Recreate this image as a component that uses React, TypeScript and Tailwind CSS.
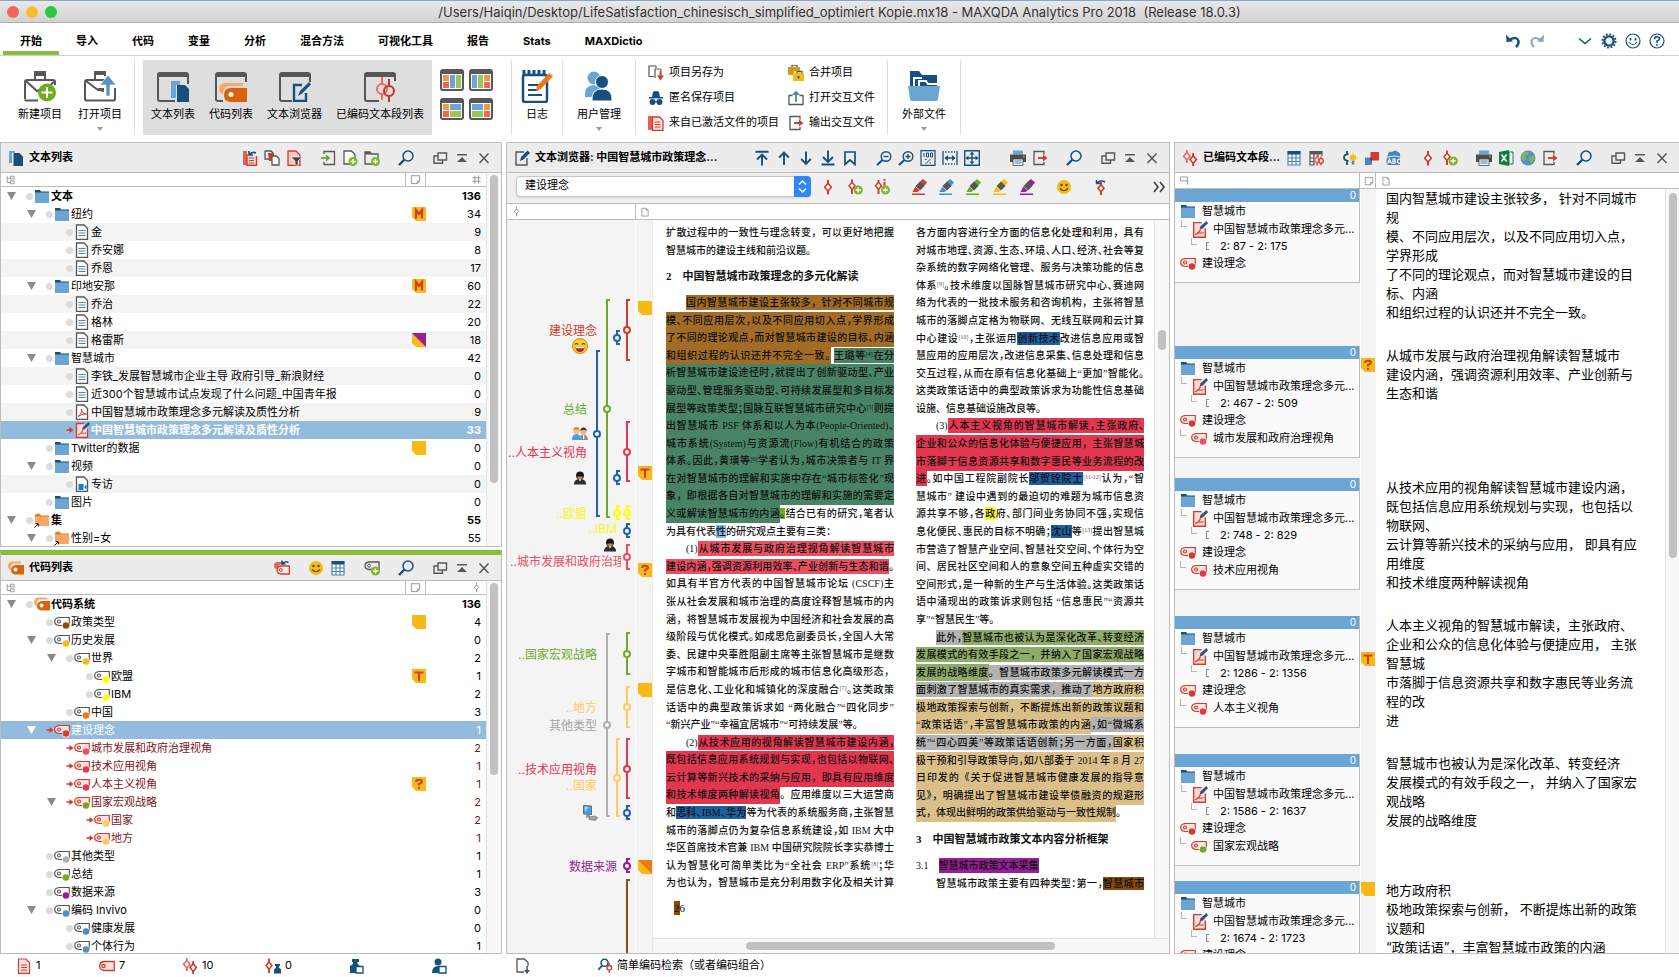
import { Fragment, type ReactNode } from "react";

const ICONS: Record<string, ReactNode> = {
  search: (
    <g fill="none" stroke="#17507f">
      <circle cx="10" cy="6" r="5" strokeWidth="1.5" />
      <path d="M6.500 9.500L1 15" strokeWidth="2.4" />
    </g>
  ),
  restore: (
    <g fill="none" stroke="#575757" strokeWidth="1.4">
      <path d="M6 3h8.500v7H6zM6 6H2v7.3h8.500V10" />
    </g>
  ),
  collapse: (
    <g fill="#575757">
      <path d="M3 4h10v1.400H3zM8 7l5 5H3z" />
    </g>
  ),
  close: <path d="M3.500 3.500l9 9.500M12.500 3.500l-9 9.500" stroke="#575757" strokeWidth="1.500" fill="none" />,
  textList: (
    <g>
      <path d="M1 1h6v2H4v10H1z" fill="#6ba5d3" />
      <path d="M5.500 3h6L15 6.500V16H5.500z" fill="#17507f" />
    </g>
  ),
  tags: (
    <g>
      <path d="M4.500 1.500H13v2H5.500Q3 3.500 3 7v3Q0 9 0 6q0-4.500 4.500-4.500z" fill="#fba667" />
      <path d="M7.500 5H16v9.500H7.500Q3 14 3 10t4.500-5z" fill="#dc6108" />
      <circle cx="7.500" cy="9.500" r="2" fill="#fff" />
    </g>
  ),
  docsUndo: (
    <g fill="none">
      <path d="M1 1h4v14H1z" fill="#e26256" />
      <path d="M5 4v11.300h9.500V6" stroke="#d23c2a" strokeWidth="1.400" fill="#f9dcd9" />
      <path d="M7 8h5M7 10.500h5M7 13h5" stroke="#d23c2a" strokeWidth="1.200" />
      <path d="M7 1v4h4M7 5q3-4 7-2" stroke="#17507f" strokeWidth="1.600" />
    </g>
  ),
  docsCopy: (
    <g fill="none" strokeWidth="1.300">
      <path d="M1 1h6l2 2v6H1z" stroke="#575757" />
      <path d="M4 3h6v8H5z" fill="#d23c2a" />
      <path d="M8 6h4.500L15 8.500V15H8z" fill="#fff" stroke="#575757" />
    </g>
  ),
  docFilter: (
    <g>
      <path d="M2 1h8l4 4v10.300H2z" fill="#f6c9c5" stroke="#d23c2a" strokeWidth="1.300" />
      <path d="M5 7h11l-4 4v5l-3-2v-3z" fill="#444" stroke="#fff" strokeWidth=".6" />
    </g>
  ),
  docImport: (
    <g fill="none">
      <path d="M4 4V1.500h10.500v13H4V12" stroke="#575757" strokeWidth="1.300" />
      <path d="M1 8h6" stroke="#6faa20" strokeWidth="1.800" />
      <path d="M6 4.500L10.500 8 6 11.500z" fill="#6faa20" />
    </g>
  ),
  docAdd: (
    <g fill="none">
      <path d="M2 1h7.500L13 4.500V14H2z" fill="#fff" stroke="#575757" strokeWidth="1.300" />
      <circle cx="11" cy="11.500" r="4.500" fill="#7fb52f" />
      <path d="M11 9v5M8.500 11.500h5" stroke="#fff" strokeWidth="1.300" />
    </g>
  ),
  folderAdd: (
    <g fill="none">
      <path d="M1 13V2h5l1.500 2H14v10H1z" stroke="#575757" strokeWidth="1.300" />
      <path d="M1 2h5l1.500 2.500H1z" fill="#575757" />
      <circle cx="11.500" cy="11.500" r="4.500" fill="#7fb52f" />
      <path d="M11.500 9v5M9 11.500h5" stroke="#fff" strokeWidth="1.300" />
    </g>
  ),
  tree: (
    <g fill="none" stroke="#8a8a8a" strokeWidth="1.300">
      <path d="M2 2v10h5M2 5h5M7 2h6v4.500H7zM7 9.500h6V14H7z" />
    </g>
  ),
  note: <path d="M2 2.500h12v8L10.500 14H2zM14 10.500h-3.500V14" fill="none" stroke="#8a8a8a" strokeWidth="1.300" />,
  hash: <path d="M5.500 2v12M11 2v12M2 5.500h12M2 10.500h12" fill="none" stroke="#8a8a8a" strokeWidth="1.300" />,
  knot: <path d="M8 1v4M8 11v4M8 4.500l3 3.500-3 3.500L5 8z" fill="none" stroke="#8a8a8a" strokeWidth="1.300" />,
  page: <path d="M3 2h7l3 3v9.500H3zM10 2v3h3" fill="none" stroke="#8a8a8a" strokeWidth="1.200" />,
  flag: <path d="M12.500 14V3H2v5.500h10.500" fill="none" stroke="#8a8a8a" strokeWidth="1.300" />,
  folder: (
    <g>
      <path d="M1 2h5l1.200 1.500H15V6H1z" fill="#17507f" />
      <path d="M1 4.500h14V15H1z" fill="#6ba5d3" />
    </g>
  ),
  folderSet: (
    <g>
      <path d="M1 3q4-3 6 .500h8V6H1z" fill="#ea7a17" />
      <path d="M1 4.500h14V14H1z" fill="#fba667" />
      <path d="M0 11h5v5H0z" fill="#fff" />
      <path d="M.500 15.500L4 12M1.500 11.700H4.300V14.500" fill="none" stroke="#000" />
    </g>
  ),
  doc: (
    <g fill="none">
      <path d="M2.500 1h7.500L13.500 4.500v10.800h-11z" stroke="#575757" strokeWidth="1.300" fill="#fff" />
      <path d="M4.500 6.500h7M4.500 9h7M4.500 11.500h7" stroke="#4b87bb" />
    </g>
  ),
  pdf: (
    <g fill="none">
      <path d="M2.500 1h7.500L13.500 4.500v10.800h-11z" stroke="#575757" strokeWidth="1.300" fill="#fff" />
      <path d="M4 12.500Q8 10 7.500 5q0 4.500 5 5Q8 9.500 4 12.500z" stroke="#d23c2a" />
    </g>
  ),
  pdfEdit: (
    <g fill="none">
      <path d="M10 1.500H2.500v13.800h11V7" stroke="#d23c2a" strokeWidth="1.300" fill="#f9dcd9" />
      <path d="M4 13q4-2 5-5M7 11q3 .500 5 0" stroke="#d23c2a" />
      <path d="M8 8l1-3 5.500-5L16 2l-5 5z" fill="#2e5380" />
    </g>
  ),
  video: (
    <g fill="none">
      <path d="M2.500 1h7.500L13.500 4.500v10.800h-11z" stroke="#575757" strokeWidth="1.300" fill="#fff" />
      <path d="M4.500 8h5v6h-5zM10 11l2.500-2.500v5z" fill="#0e7fc0" />
    </g>
  ),
  arrow: <path d="M1 6.500h6V2l8 6-8 6V9.500H1z" fill="#d23c2a" />,
  tagUndo: (
    <g fill="none">
      <path d="M3.500 2H8v2Q3 5 3.500 9 0 9 0 5.500T3.500 2z" fill="#e26256" />
      <path d="M7 6h8.300v8H7Q3 13.500 3 10t4-4z" fill="#fde8e6" stroke="#d23c2a" strokeWidth="1.300" />
      <circle cx="6.800" cy="10" r="1.500" stroke="#d23c2a" />
      <path d="M8 .500v3.500h3.500M8 4q3-3.500 6.500-1.500" stroke="#17507f" strokeWidth="1.600" />
    </g>
  ),
  tagAdd: (
    <g fill="none">
      <path d="M5 2h10v7.500H5Q1 9 1 5.700T5 2z" stroke="#575757" strokeWidth="1.300" />
      <circle cx="5" cy="5.700" r="1.500" stroke="#575757" />
      <circle cx="11.500" cy="11" r="4.500" fill="#7fb52f" />
      <path d="M11.500 8.500v5M9 11h5" stroke="#fff" strokeWidth="1.300" />
    </g>
  ),
  smile: (
    <g>
      <circle cx="8" cy="8" r="7" fill="#f6b918" />
      <circle cx="5.500" cy="6" r="1.200" fill="#5c4a1c" />
      <circle cx="10.500" cy="6" r="1.200" fill="#5c4a1c" />
      <path d="M4 9.500q4 4.500 8 0" fill="none" stroke="#5c4a1c" strokeWidth="1.200" />
    </g>
  ),
  grid: (
    <g fill="none">
      <path d="M2 4.500v10.500h12V4.500M6 4v11M10 4v11M2 8h12M2 11.500h12" stroke="#4b87bb" strokeWidth="1.200" fill="#fff" />
      <path d="M1.400 1h13.200v3.500H1.400z" fill="#17507f" />
    </g>
  ),
  gridCode: (
    <g fill="none">
      <path d="M2 4.500v10.500h4M14 4.500V6M6 4v11M10 4v3M2 8h4M2 11.500h4" stroke="#575757" strokeWidth="1.200" />
      <path d="M1.400 1h13.200v3.500H1.400z" fill="#575757" />
      <path d="M9 5.500v2M9 12.500v3M13 6.500v2M13 13.500v2" stroke="#d23c2a" strokeWidth="1.300" />
      <circle cx="9" cy="10" r="2.300" stroke="#e26256" strokeWidth="1.300" />
      <circle cx="13" cy="11" r="2.300" stroke="#d23c2a" strokeWidth="1.300" />
    </g>
  ),
  edit: (
    <g fill="none">
      <path d="M10 2H2v13h11V8" stroke="#575757" strokeWidth="1.400" />
      <path d="M6 11l1-4 6.500-6.500L16 3 9.500 9.500z" fill="#17507f" />
    </g>
  ),
  toTop: <path d="M1.500 1.700h13M8 15.500V5M3 9.500l5-5 5 5" fill="none" stroke="#17507f" strokeWidth="1.900" />,
  up: <path d="M8 15V3M3.200 7.500L8 2.500l4.800 5" fill="none" stroke="#17507f" strokeWidth="1.900" />,
  down: <path d="M8 1.500v12M3.200 9L8 14l4.800-5" fill="none" stroke="#17507f" strokeWidth="1.900" />,
  toBottom: <path d="M1.500 14.500h13M8 .500v11M3 7l5 5 5-5" fill="none" stroke="#17507f" strokeWidth="1.900" />,
  bookmark: <path d="M3 2h10v12.500l-5-4.500-5 4.500z" fill="none" stroke="#17507f" strokeWidth="1.700" />,
  zoomOut: (
    <g fill="none" stroke="#17507f">
      <circle cx="10" cy="6.500" r="4.800" strokeWidth="1.400" />
      <path d="M7.500 6.500h5" strokeWidth="1.300" />
      <path d="M6.500 10L1 15" strokeWidth="2" />
    </g>
  ),
  zoomIn: (
    <g fill="none" stroke="#17507f">
      <circle cx="10" cy="6.500" r="4.800" strokeWidth="1.400" />
      <path d="M7.500 6.500h5M10 4v5" strokeWidth="1.300" />
      <path d="M6.500 10L1 15" strokeWidth="2" />
    </g>
  ),
  full: (
    <g fill="none" stroke="#17507f">
      <path d="M1 .700h14v14.600H1z" strokeWidth="1.200" />
      <path d="M4 3v4M6.500 3h2v4h-2zM10.500 3h2v4h-2zM10.500 9l-5 5M5 9.500h1.500M9.500 13H11" />
    </g>
  ),
  fitWidth: (
    <g fill="none" stroke="#17507f" strokeWidth="1.300">
      <path d="M1 1v14M15 1v14M3 8h10" />
      <path d="M3 2h10M3 14h10" strokeDasharray="1.500 1.500" />
      <path d="M6 5L2.500 8 6 11zM10 5l3.500 3L10 11z" fill="#17507f" stroke="none" />
    </g>
  ),
  fitPage: (
    <g fill="none" stroke="#17507f" strokeWidth="1.400">
      <path d="M.700.700h14.600v14.600H.700zM8 3v10M3 8h10" />
      <path d="M8 1.500l2.500 3h-5zM8 14.500l2.500-3h-5zM1.500 8l3-2.500v5zM14.500 8l-3-2.500v5z" fill="#17507f" stroke="none" />
    </g>
  ),
  printer: (
    <g>
      <path d="M3 .500h10v4H3z" fill="#6ba5d3" />
      <path d="M0 4.500h16v7.500H0z" fill="#4d4d4d" />
      <path d="M3 9h10v6.500H3z" fill="#e9f0f6" stroke="#4d4d4d" strokeWidth=".8" />
      <path d="M4.500 11h7M4.500 13h7" stroke="#4b87bb" />
      <circle cx="13.800" cy="6.500" r=".9" fill="#7fb52f" />
    </g>
  ),
  exportIcon: (
    <g fill="none">
      <path d="M12 4.500V1.500H2v13h10V12" stroke="#575757" strokeWidth="1.300" />
      <path d="M6 8h6" stroke="#d23c2a" strokeWidth="1.900" />
      <path d="M11 4.500L15.500 8 11 11.500z" fill="#d23c2a" />
    </g>
  ),
  code: (
    <g fill="none" stroke="#d23c2a">
      <path d="M8 1v4M8 11v4.500" strokeWidth="2" />
      <path d="M8 4.300l3.300 3.900L8 12 4.700 8.200z" strokeWidth="1.600" fill="#fff" />
    </g>
  ),
  codeAdd: (
    <g fill="none">
      <path d="M5 .500v3M5 10.500V15" stroke="#d23c2a" strokeWidth="1.900" />
      <path d="M5 3.300l3 3.500-3 3.700-3-3.700z" stroke="#d23c2a" strokeWidth="1.500" fill="#fff" />
      <circle cx="11.200" cy="11" r="4.600" fill="#7fb52f" />
      <path d="M11.200 8.500v5M8.700 11h5" stroke="#fff" strokeWidth="1.300" />
    </g>
  ),
  codeInvivo: (
    <g fill="none">
      <path d="M4.500 1v3M4.500 10.500V15M10.500 0v1.800M10.500 2.800v4" stroke="#d23c2a" strokeWidth="1.900" />
      <path d="M4.500 3.300l3 3.500-3 3.700-3-3.700z" stroke="#d23c2a" strokeWidth="1.500" fill="#fff" />
      <circle cx="11.500" cy="11" r="4.500" fill="#7fb52f" />
      <path d="M11.500 8.500v5M9 11h5" stroke="#fff" strokeWidth="1.300" />
    </g>
  ),
  codeUndo: (
    <g fill="none">
      <path d="M8 3v3M8 12v4" stroke="#d23c2a" strokeWidth="2" />
      <path d="M8 5.700l3 3.500-3 3.500-3-3.500z" stroke="#d23c2a" strokeWidth="1.600" fill="#fff" />
      <path d="M3.500 1v3.500h4M4 4q3-3.500 8-1" stroke="#17507f" strokeWidth="1.500" />
    </g>
  ),
  codes: (
    <g fill="none">
      <path d="M4.800 0v3M4.800 10v3" stroke="#e8695d" strokeWidth="1.800" />
      <path d="M4.800 2.500L8 6.200l-3.200 3.900L1.600 6.200z" stroke="#e8695d" strokeWidth="1.500" />
      <path d="M11.200 3v3M11.200 13v3" stroke="#c93324" strokeWidth="1.800" />
      <path d="M11.200 5.700l3.200 3.800-3.200 3.900L8 9.500z" stroke="#c93324" strokeWidth="1.500" />
    </g>
  ),
  codeIdea: (
    <g fill="none">
      <path d="M5 1v3M5 11v4M6.500 4Q2 4.500 2 7.500T6.500 11" stroke="#17507f" strokeWidth="1.800" />
      <circle cx="11" cy="8" r="3" fill="#f6b918" />
      <path d="M11 3v1.500M6.500 8H8M14.500 8H16M8 5l1 1M14 5l-1 1" stroke="#f6b918" />
      <path d="M9.700 11h2.600v3.500H9.700z" fill="#4b87bb" />
    </g>
  ),
  squares: (
    <g>
      <path d="M1 7.500h7V15H1z" fill="#4b87bb" />
      <path d="M6.500 2H15v8.500H6.500z" fill="#d23c2a" />
      <path d="M6.500 7.500H8v3H6.500z" fill="#7b2a52" />
    </g>
  ),
  cloud: (
    <g>
      <path d="M2 5q0-4 4-3 3-3 6 0 3 1 2 4v9H1.500Q-1 11 2 5z" fill="#4b87bb" />
      <path d="M0 8q8-4 16 0" stroke="#dbe8f3" fill="none" />
      <path d="M1.500 13.500l2-4.500 2 4.500M2.300 12h2.400M7 13.500V9h1.500q1.500 1 0 2.200 2 1 0 2.300zM14.500 9.500q-3-1-3 1.700t3 1.800" fill="none" stroke="#fff" strokeWidth="1.100" />
    </g>
  ),
  excel: (
    <g>
      <path d="M1 2l10-2v16L1 14z" fill="#0f7c41" />
      <path d="M11 2h4v12h-4z" fill="#fff" stroke="#0f7c41" />
      <path d="M3.500 4.500l5 7M8.500 4.500l-5 7" stroke="#fff" strokeWidth="1.600" />
    </g>
  ),
  globe: (
    <g>
      <circle cx="8" cy="8" r="7.500" fill="#5490c6" />
      <path d="M3 3q3-3 6-1L8 5 5 6l1 4-3 1-2-3zM9 7l5-2 1 4-3 4-3-2z" fill="#7fb552" />
    </g>
  ),
  undo: (
    <g>
      <path d="M5 6.500Q12 3 13.500 8q.300 3.500-2.500 6" fill="none" stroke="#17507f" strokeWidth="2.500" />
      <path d="M1 1.500L1.500 9l6.500-.500z" fill="#17507f" />
    </g>
  ),
  redo: (
    <g>
      <path d="M11 6.500Q4 3 2.500 8q-.300 3.500 2.500 6" fill="none" stroke="#8aa6c1" strokeWidth="2" />
      <path d="M15 1.500L14.500 9 8 8.500z" fill="#8aa6c1" />
    </g>
  ),
  chevron: <path d="M2 5.500l6 5 6-5" fill="none" stroke="#17507f" strokeWidth="1.600" />,
  gear: (
    <g fill="none" stroke="#17507f">
      <circle cx="8" cy="8" r="4.600" strokeWidth="2.400" />
      <circle cx="8" cy="8" r="6.600" strokeWidth="1.900" strokeDasharray="1.900 1.560" />
    </g>
  ),
  face: (
    <g fill="none" stroke="#17507f" strokeWidth="1.200">
      <circle cx="8" cy="8" r="7" />
      <path d="M4 9q4 5.500 8 0" />
      <path d="M5.500 5v2.500M10.500 5v2.500" strokeWidth="1.700" />
    </g>
  ),
  help: (
    <g fill="none" stroke="#17507f" strokeWidth="1.200">
      <circle cx="8" cy="8" r="7" />
      <path d="M5.500 6.300q0-2.500 2.500-2.500t2.500 2Q10.500 7.300 8 8v2" strokeWidth="1.600" />
      <path d="M8 11v1.700" strokeWidth="1.600" />
    </g>
  ),
  saveAs: (
    <g fill="none">
      <path d="M6 11.500H1V1h7v2" stroke="#575757" strokeWidth="1.200" />
      <path d="M7 13V4h5l1.500 1.500" stroke="#575757" strokeWidth="1.200" />
      <path d="M12.500 6v5" stroke="#d23c2a" strokeWidth="2" />
      <path d="M9 10.500h7L12.500 15.500z" fill="#d23c2a" />
    </g>
  ),
  incognito: (
    <g fill="#17507f">
      <path d="M5 2q3-2 6 0l1 5h3v1.500H1V7h3z" />
      <circle cx="4.500" cy="12" r="3" />
      <circle cx="11.500" cy="12" r="3" />
      <path d="M6 11h4v1.200H6z" />
    </g>
  ),
  docsActive: (
    <g>
      <path d="M0 1h5v14H0z" fill="#e26256" />
      <path d="M4.500 2h7L15 5.500v10H4.500z" fill="#fbe3e1" stroke="#d23c2a" strokeWidth="1.300" />
      <path d="M7 7h5.500M7 9.500h5.500M7 12h5.500" stroke="#d23c2a" />
    </g>
  ),
  merge: (
    <g>
      <path d="M4 2V0h5v2M9 8V6.500h5V8" fill="none" stroke="#575757" strokeWidth="1.300" />
      <path d="M0 2h12v4H6v4H0z" fill="#d39a12" />
      <path d="M5 8h11v8H5z" fill="#f6b918" />
      <path d="M9.500 11h2v2.500h-2z" fill="#575757" />
    </g>
  ),
  openFile: (
    <g fill="none">
      <path d="M4.500 5.500H1v9h14v-9h-3.500" stroke="#575757" strokeWidth="1.300" />
      <path d="M8 12V4" stroke="#4b87bb" strokeWidth="1.800" />
      <path d="M8 .500l4 4.500H4z" fill="#4b87bb" />
    </g>
  ),
  tagRed: (
    <g fill="none" stroke="#d23c2a" strokeWidth="1.300">
      <path d="M5 3.500h10.300v9H5Q.700 12 .700 8T5 3.500z" fill="#fbe3e1" />
      <circle cx="4.500" cy="8" r="1.600" />
    </g>
  ),
  docRed: (
    <g fill="none" stroke="#d23c2a" strokeWidth="1.200">
      <path d="M2.500 1H10l3.500 3.500v10.800h-11z" fill="#fbe3e1" />
      <path d="M5 7h6M5 9.500h6M5 12h6" />
    </g>
  ),
  codeWeight: (
    <g>
      <path d="M4 .500v4M4 11v4" stroke="#d23c2a" strokeWidth="1.900" />
      <path d="M4 4l3 3.500-3 3.700-3-3.700z" fill="#fff" stroke="#d23c2a" strokeWidth="1.500" />
      <path d="M10 6h5v2h-1v1.500l2 2V15.500H9v-4l2-2V8h-1z" fill="#17507f" />
    </g>
  ),
  weight: (
    <g>
      <path d="M4 1h7v3H9.500v2L12 8v7H2V8l3-2V4H4z" fill="#17507f" />
      <path d="M8 8.500h7V15H8z" fill="#fff" stroke="#17507f" strokeWidth="1.300" />
    </g>
  ),
  user: (
    <g>
      <circle cx="7" cy="4" r="3.500" fill="#17507f" />
      <path d="M1 15q0-7 6-7t5 7z" fill="#17507f" />
      <path d="M8 8.500h7V15H8z" fill="#fff" stroke="#17507f" strokeWidth="1.300" />
    </g>
  ),
  docDown: (
    <g fill="none">
      <path d="M9 14H2V1h7.500L13 4.500V8" stroke="#575757" strokeWidth="1.300" />
      <path d="M12 8v5" stroke="#2e5380" strokeWidth="1.500" />
      <path d="M9 12h6l-3 4z" fill="#2e5380" />
    </g>
  ),
  retrieval: (
    <g fill="none">
      <circle cx="7" cy="5" r="3.800" stroke="#17507f" strokeWidth="1.600" />
      <path d="M4.500 8L.500 12.500" stroke="#17507f" strokeWidth="2" />
      <path d="M12 5v3M12 13v3" stroke="#d23c2a" strokeWidth="1.300" />
      <circle cx="12" cy="10.500" r="2.500" stroke="#d23c2a" strokeWidth="1.400" />
    </g>
  ),
  laugh: (
    <g>
      <circle cx="8" cy="8" r="7.500" fill="#fbcf2b" stroke="#c98a10" />
      <path d="M3 6.500q1.500-2 3 0M10 6.500q1.500-2 3 0" fill="none" stroke="#4a3208" strokeWidth="1.200" />
      <path d="M3 8.500h10q-1 5.500-5 5.500T3 8.500z" fill="#b02d1c" />
      <path d="M3.500 8.500h9v1.700h-9z" fill="#fff" />
    </g>
  ),
  pair: (
    <g>
      <circle cx="4.500" cy="5" r="3" fill="#f3c08f" />
      <path d="M1.300 5q0-4 3.200-4t3.200 4l-1-1.500h-4z" fill="#d8812a" />
      <path d="M0 14q0-6 4.500-6T9 14z" fill="#4aa0e0" />
      <circle cx="11.500" cy="5.500" r="3" fill="#e8b48a" />
      <path d="M8.300 5.500q0-4 3.200-4t3.200 4l-1-1.500h-4z" fill="#4b2c14" />
      <path d="M7.500 14q0-5.500 4-5.500T16 14z" fill="#8a8a8a" />
      <path d="M11 9h1.200v4H11z" fill="#fff" />
    </g>
  ),
  agent: (
    <g>
      <circle cx="8" cy="5" r="4.500" fill="#1c1c1c" />
      <path d="M5 5h6v2q-1 2.500-3 2.500T5 7z" fill="#b98259" />
      <path d="M4.500 4.500h7v1.700h-7z" fill="#000" />
      <path d="M1 15.500q0-6.500 7-6.500t7 6.500z" fill="#2d2d2d" />
      <path d="M6.500 9.500L8 12l1.500-2.500z" fill="#fff" />
    </g>
  ),
  computer: (
    <g>
      <path d="M1.500.500l8 .500v8.500l-8-.500z" fill="#4a9fdc" stroke="#5d6d7a" />
      <path d="M2.500 1.500l4 .500-3.500 5z" fill="#a6d6f5" />
      <path d="M4.500 10h3l1 2.500h-5z" fill="#8a99a5" />
      <path d="M7 12l6-1 3 2-3 2.500-6-1z" fill="#9aa5ad" stroke="#5d6d7a" strokeWidth=".6" />
    </g>
  ),
};

function Icon({ name, className = "size-4" }: { name: string; className?: string }) {
  return (
    <svg viewBox="0 0 16 16" className={`shrink-0 ${className}`} aria-hidden="true">
      {ICONS[name]}
    </svg>
  );
}

function Tag({ color, active }: { color: string; active?: boolean }) {
  const line = active ? "#d23c2a" : "#575757";
  return (
    <svg viewBox="0 0 16 16" className="size-4 shrink-0" aria-hidden="true">
      <path d="M5 3.500h10.300v8H5Q.700 11 .700 7.500T5 3.500z" fill={active ? "#fbe3e1" : "#fff"} stroke={line} strokeWidth="1.200" />
      <circle cx="5" cy="7.500" r="1.500" fill="none" stroke={line} strokeWidth="1.100" />
      <circle cx="12" cy="11.500" r="3.900" fill="#fff" />
      <circle cx="12" cy="11.500" r="3.300" fill={color} />
    </svg>
  );
}

function Memo({ kind }: { kind: string }) {
  return (
    <svg viewBox="0 0 14 14" className="block size-[14px] shrink-0" aria-hidden="true">
      <path d="M0 0h14v14H4L0 10z" fill="#f6b918" />
      {kind === "M" && <path d="M4 11.500V3l3 4 3-4v8.500" fill="none" stroke="#d23c2a" strokeWidth="2.200" />}
      {kind === "T" && <path d="M2.500 3.500h9M7 3.500v8.500" fill="none" stroke="#d23c2a" strokeWidth="2" />}
      {kind === "?" && <path d="M4 5q0-2.300 3-2.300t3 1.900Q10 6 7 7v1.500M7 10v2" fill="none" stroke="#d23c2a" strokeWidth="2" />}
      {kind === "purple" && <path d="M0 0h14v14z" fill="#961e96" />}
      {kind === "orange" && <path d="M0 0h14v14z" fill="#ee7a16" />}
    </svg>
  );
}

type Groups = [string, string][][];

function IconButtons({ groups }: { groups: Groups }) {
  return (
    <div className="flex gap-[18px]">
      {groups.map((group, i) => (
        <div key={i} className="flex gap-[6px]">
          {group.map(([name, label]) => (
            <button key={label} type="button" aria-label={label} className="size-4">
              <Icon name={name} />
            </button>
          ))}
        </div>
      ))}
    </div>
  );
}

const WINDOW_BUTTONS: [string, string][] = [
  ["restore", "还原"],
  ["collapse", "折叠"],
  ["close", "关闭"],
];

type Row = {
  level: number;
  open?: boolean;
  icon?: string;
  tag?: string;
  label: string;
  memo?: string;
  count: number;
  bold?: boolean;
  stripe?: boolean;
  active?: boolean;
  selected?: boolean;
};

const DOCUMENTS: Row[] = [
  { level: 0, open: true, icon: "folder", label: "文本", count: 136, bold: true },
  { level: 1, open: true, icon: "folder", label: "纽约", memo: "M", count: 34 },
  { level: 2, icon: "doc", label: "金", count: 9, stripe: true },
  { level: 2, icon: "doc", label: "乔安娜", count: 8 },
  { level: 2, icon: "doc", label: "乔恩", count: 17, stripe: true },
  { level: 1, open: true, icon: "folder", label: "印地安那", memo: "M", count: 60 },
  { level: 2, icon: "doc", label: "乔治", count: 22, stripe: true },
  { level: 2, icon: "doc", label: "格林", count: 20 },
  { level: 2, icon: "doc", label: "格雷斯", memo: "purple", count: 18, stripe: true },
  { level: 1, open: true, icon: "folder", label: "智慧城市", count: 42 },
  { level: 2, icon: "doc", label: "李铁_发展智慧城市企业主导 政府引导_新浪财经", count: 0, stripe: true },
  { level: 2, icon: "doc", label: "近300个智慧城市试点发现了什么问题_中国青年报", count: 0 },
  { level: 2, icon: "pdf", label: "中国智慧城市政策理念多元解读及质性分析", count: 9, stripe: true },
  { level: 2, icon: "pdfEdit", label: "中国智慧城市政策理念多元解读及质性分析", count: 33, active: true, selected: true, bold: true },
  { level: 1, icon: "folder", label: "Twitter的数据", memo: "plain", count: 0 },
  { level: 1, open: true, icon: "folder", label: "视频", count: 0 },
  { level: 2, icon: "video", label: "专访", count: 0, stripe: true },
  { level: 1, icon: "folder", label: "图片", count: 0 },
  { level: 0, open: true, icon: "folderSet", label: "集", count: 55, bold: true },
  { level: 1, open: true, icon: "folderSet", label: "性别=女", count: 55 },
];

const CODES: Row[] = [
  { level: 0, open: true, icon: "tags", label: "代码系统", count: 136, bold: true },
  { level: 1, tag: "#8a4d17", label: "政策类型", memo: "plain", count: 4 },
  { level: 1, open: true, tag: "#f8b91c", label: "历史发展", count: 0 },
  { level: 2, open: true, tag: "#f8b91c", label: "世界", count: 2 },
  { level: 3, tag: "#ffff00", label: "欧盟", memo: "T", count: 1 },
  { level: 3, tag: "#ffff00", label: "IBM", count: 2 },
  { level: 2, tag: "#ee7a16", label: "中国", count: 3 },
  { level: 1, open: true, tag: "#d23c2a", label: "建设理念", count: 1, active: true, selected: true },
  { level: 2, tag: "#ea4f60", label: "城市发展和政府治理视角", count: 2, active: true },
  { level: 2, tag: "#e3364f", label: "技术应用视角", count: 1, active: true },
  { level: 2, tag: "#e3364f", label: "人本主义视角", memo: "?", count: 1, active: true },
  { level: 2, open: true, tag: "#6faa2a", label: "国家宏观战略", count: 2, active: true },
  { level: 3, tag: "#ffcb60", label: "国家", count: 2, active: true },
  { level: 3, tag: "#ffcb60", label: "地方", count: 1, active: true },
  { level: 1, tag: "#b0b0b0", label: "其他类型", count: 1 },
  { level: 1, tag: "#6faa2a", label: "总结", count: 1 },
  { level: 1, tag: "#961e96", label: "数据来源", count: 3 },
  { level: 1, open: true, tag: "#4f8fc6", label: "编码 Invivo", count: 0 },
  { level: 2, tag: "#4f8fc6", label: "健康发展", count: 0 },
  { level: 2, tag: "#4f8fc6", label: "个体行为", count: 1 },
];

const INDENT = ["pl-0", "pl-5", "pl-10", "pl-[60px]"];

function TreeTable({ rows, countIcon, thumb, label }: { rows: Row[]; countIcon: string; thumb: string; label: string }) {
  return (
    <div className="flex min-h-0 flex-1 overflow-hidden">
      <div className="min-w-0 flex-1 overflow-hidden bg-white">
        <table className="w-full table-fixed border-separate border-spacing-0" aria-label={label}>
          <colgroup>
            <col />
            <col className="w-[21px]" />
            <col className="w-[60px]" />
          </colgroup>
          <thead>
            <tr className="h-[14px]">
              <th className="h-[14px] border-b border-[#bdbdbd] p-0 pl-[5px]" aria-label="名称">
                <Icon name="tree" className="size-[10px]" />
              </th>
              <th className="border-x border-b border-[#bdbdbd] p-0 pl-[4px]" aria-label="备忘录">
                <Icon name="note" className="size-[11px]" />
              </th>
              <th className="border-b border-[#bdbdbd] p-0" aria-label="数量">
                <Icon name={countIcon} className="ml-auto mr-1 size-[11px]" />
              </th>
            </tr>
          </thead>
          <tbody>
            {rows.map((row, i) => {
              const tone = row.selected
                ? "bg-[#93bbde] text-white"
                : row.active
                  ? "text-[#7d1420]"
                  : row.stripe
                    ? "bg-[#f4f4f4] text-black"
                    : "text-black";
              return (
                <tr key={i} className={`h-[18px] text-[11px] leading-[18px] ${tone} ${row.bold ? "font-bold" : ""}`}>
                  <td className="p-0">
                    <div className={`flex h-[18px] items-center whitespace-nowrap ${INDENT[row.level]}`}>
                      <span className="flex w-[25px] shrink-0 pl-[6px]">
                        {row.open && (
                          <svg viewBox="0 0 9 8" className="h-2 w-[9px]" aria-hidden="true">
                            <path d="M0 0h9L4.500 8z" fill={row.selected ? "#fff" : "#8a8a8a"} />
                          </svg>
                        )}
                      </span>
                      {row.active ? (
                        <Icon name="arrow" className="size-[8px]" />
                      ) : (
                        <span className="mr-px size-[7px] shrink-0 rounded-full bg-[#dcdcdc]" />
                      )}
                      {row.tag ? <Tag color={row.tag} active={row.active} /> : <Icon name={row.icon ?? "doc"} />}
                      <span className="ml-[1px]">{row.label}</span>
                    </div>
                  </td>
                  <td className="p-0">
                    {row.memo && (
                      <div className="flex justify-end">
                        <Memo kind={row.memo} />
                      </div>
                    )}
                  </td>
                  <td className="p-0 pr-[5px] text-right">{row.count}</td>
                </tr>
              );
            })}
          </tbody>
        </table>
      </div>
      <div className="w-[15px] shrink-0 border-l border-[#e2e2e2] bg-[#f8f8f8] pl-[3px] pt-[2px]">
        <div className={`w-2 rounded-full bg-[#c1c1c1] ${thumb}`} />
      </div>
    </div>
  );
}

function PanelHeader({ icon, title, left, groups, compact }: { icon: string; title: string; left?: Groups; groups: Groups; compact?: boolean }) {
  return (
    <header className={`flex shrink-0 items-center border-b border-[#bdbdbd] bg-[#ececec] pl-[7px] pr-[9px] ${compact ? "h-[26px]" : "h-[30px]"}`}>
      <Icon name={icon} />
      <h2 className="ml-[5px] whitespace-nowrap text-[11px] font-bold">{title}</h2>
      <div className="ml-auto flex gap-[30px]">
        {left && <IconButtons groups={left} />}
        <IconButtons groups={groups} />
      </div>
    </header>
  );
}

function Frame({ children, cut }: { children: ReactNode; cut: string }) {
  return (
    <svg viewBox="0 0 32 32" className="size-8" aria-hidden="true">
      <path d={cut} fill="none" stroke="#575757" strokeWidth="2" />
      <path d="M0 5q0-3 3-3h26q3 0 3 3v2H0z" fill="#575757" />
      {children}
    </svg>
  );
}

const BIG: Record<string, ReactNode> = {
  newProject: (
    <svg viewBox="0 0 32 32" className="size-8" aria-hidden="true">
      <path d="M11 9V3h10v6M1 29V12q0-2 2-2h26q2 0 2 2v3M1 29.500q0 1 1 1h12M2 11l11 10 3-1M31 11l-7 6" fill="none" stroke="#575757" strokeWidth="2" />
      <path d="M10 1h12v5H10z" fill="#575757" />
      <circle cx="23" cy="22.500" r="9" fill="#6faa20" />
      <path d="M23 17v11M17.500 22.500h11" stroke="#fff" strokeWidth="2" />
    </svg>
  ),
  openProject: (
    <svg viewBox="0 0 32 32" className="size-8" aria-hidden="true">
      <path d="M11 9V3h10v3M20 10H3q-2 0-2 2v17q0 1.500 1.500 1.500h27q1.500 0 1.500-1.500V18M2 11l12 9h6" fill="none" stroke="#575757" strokeWidth="2" />
      <path d="M10 1h12v4H10zM14 18h6v4l-5-1z" fill="#575757" />
      <path d="M24 5l8 10h-6v11h-4V15h-6z" fill="#5b93c0" stroke="#fff" strokeWidth=".6" />
    </svg>
  ),
  documents: (
    <Frame cut="M1 6v23q0 2 2 2h15M31 6v8">
      <path d="M14 11h9v4h-4v13h-5z" fill="#6ba5d3" />
      <path d="M20 15h8l4 4v13H20z" fill="#17507f" />
    </Frame>
  ),
  codes: (
    <Frame cut="M1 6v23q0 2 2 2h5M31 6v6">
      <path d="M11 13h17v3H13q-5 1-5 8-4-1-4-5 0-6 7-6z" fill="#fba667" />
      <path d="M16 18h16v14H16q-7 0-7-7t7-7z" fill="#dc6108" />
      <circle cx="16" cy="24.500" r="2.500" fill="#fff" />
    </Frame>
  ),
  browser: (
    <Frame cut="M1 6v23q0 2 2 2h10M31 6v6">
      <path d="M23 15h-8v16h12v-8" fill="none" stroke="#17507f" strokeWidth="2.400" />
      <path d="M19 26l2-5 9-9 2 2.500-9 9z" fill="#17507f" />
    </Frame>
  ),
  segments: (
    <Frame cut="M1 6v23q0 2 2 2h12M31 6v5">
      <g fill="none" strokeWidth="2">
        <path d="M18 7v7M18 24v6" stroke="#ee6a5c" />
        <circle cx="18" cy="19" r="5" stroke="#ee6a5c" />
        <path d="M25 9v7M25 26v6" stroke="#c93324" />
        <circle cx="25" cy="21" r="5" stroke="#c93324" />
      </g>
    </Frame>
  ),
  journal: (
    <svg viewBox="0 0 32 34" className="h-[34px] w-8" aria-hidden="true">
      <path d="M2 8q0-2 2-2h20q2 0 2 2v23q0 2-2 2H4q-2 0-2-2z" fill="#fff" stroke="#17507f" strokeWidth="2.500" />
      <path d="M3 1v6M8 1v6M13 1v6M18 1v6M23 1v6" stroke="#17507f" strokeWidth="3" />
      <path d="M7 16h14M7 21h10M7 26h14" stroke="#17507f" strokeWidth="2" />
      <path d="M15 22l1-5L28 4l4 3-12 13z" fill="#ee7a16" />
    </svg>
  ),
  users: (
    <svg viewBox="0 0 32 32" className="size-8" aria-hidden="true">
      <circle cx="11" cy="8" r="6.500" fill="#6ba5d3" />
      <path d="M2 27q-1-11 8-12l8 2-6 10z" fill="#6ba5d3" />
      <circle cx="19" cy="12" r="6.500" fill="#17507f" stroke="#fff" />
      <path d="M9 31q-1-12 10-12t10 12z" fill="#17507f" stroke="#fff" />
    </svg>
  ),
  external: (
    <svg viewBox="0 0 32 32" className="size-8" aria-hidden="true">
      <path d="M2 1h9l3 4h15v12H2z" fill="#17507f" />
      <path d="M6 16V8h8M11 16v-5h7l2 3h9" fill="none" stroke="#fff" strokeWidth="2" />
      <path d="M0 16h32l-2 13q0 2-2 2H4q-2 0-2-2z" fill="#6ba5d3" />
    </svg>
  ),
};

function BigButton({ icon, label, menu, className = "px-[7px]" }: { icon: string; label: string; menu?: boolean; className?: string }) {
  return (
    <button type="button" className={`flex h-[75px] shrink-0 flex-col items-center pt-2 ${className}`}>
      <span className="flex h-9 items-center">{BIG[icon]}</span>
      <span className="whitespace-nowrap text-[11px] leading-5">{label}</span>
      {menu && (
        <svg viewBox="0 0 6 4" className="mt-[3px] h-1 w-[6px]" aria-hidden="true">
          <path d="M0 0h6L3 4z" fill="#9a9a9a" />
        </svg>
      )}
    </button>
  );
}

function Divider() {
  return <div className="h-[75px] w-px shrink-0 bg-[#dedede]" />;
}

const LAYOUTS = [
  <>
    <path d="M3 6h6v6H3z" fill="#f2954a" />
    <path d="M3 13h6v6H3z" fill="#f16553" />
    <path d="M10 6h5v13h-5z" fill="#6ba5d3" />
    <path d="M16 6h5v13h-5z" fill="#9cc653" />
  </>,
  <>
    <path d="M3 6h5v13H3z" fill="#6ba5d3" />
    <path d="M9 6h5v13H9z" fill="#9cc653" />
    <path d="M15 6h6v6h-6z" fill="#f2954a" />
    <path d="M15 13h6v6h-6z" fill="#f16553" />
  </>,
  <>
    <path d="M3 6h6v6H3z" fill="#f2954a" />
    <path d="M3 13h6v6H3z" fill="#f16553" />
    <path d="M10 6h11v6H10z" fill="#6ba5d3" />
    <path d="M10 13h11v6H10z" fill="#9cc653" />
  </>,
  <>
    <path d="M3 6h11v6H3z" fill="#6ba5d3" />
    <path d="M3 13h11v6H3z" fill="#9cc653" />
    <path d="M15 6h6v6h-6z" fill="#f2954a" />
    <path d="M15 13h6v6h-6z" fill="#f16553" />
  </>,
];

function SmallButtons({ items }: { items: [string, string][] }) {
  return (
    <div className="flex h-[75px] flex-col items-start">
      {items.map(([icon, label]) => (
        <button key={label} type="button" className="flex h-[25px] items-center gap-[5px] whitespace-nowrap text-[11px]">
          <Icon name={icon} />
          {label}
        </button>
      ))}
    </div>
  );
}

function Ribbon() {
  return (
    <div className="flex h-[86px] shrink-0 overflow-hidden bg-white pl-[10px] pt-1">
      <BigButton icon="newProject" label="新建项目" className="px-2" />
      <BigButton icon="openProject" label="打开项目" menu className="px-2" />
      <div className="flex pl-1 pr-2">
        <Divider />
      </div>
      <div className="flex self-start bg-[#dedede] px-px">
        <BigButton icon="documents" label="文本列表" />
        <BigButton icon="codes" label="代码列表" />
        <BigButton icon="browser" label="文本浏览器" />
        <BigButton icon="segments" label="已编码文本段列表" />
      </div>
      <div className="ml-2 mr-[18px] grid h-[52px] grid-cols-2 gap-[5px] self-start pt-2">
        {LAYOUTS.map((shape, i) => (
          <button key={i} type="button" aria-label={`布局 ${i + 1}`} className="h-6 w-6">
            <svg viewBox="0 0 24 22" className="h-[22px] w-6" aria-hidden="true">
              <path d="M1 3v16q0 2 2 2h18q2 0 2-2V3" fill="#fff" stroke="#575757" strokeWidth="2" />
              <path d="M0 3q0-3 3-3h18q3 0 3 3v2H0z" fill="#575757" />
              {shape}
            </svg>
          </button>
        ))}
      </div>
      <Divider />
      <BigButton icon="journal" label="日志" className="px-[9px]" />
      <Divider />
      <BigButton icon="users" label="用户管理" menu className="px-[14px]" />
      <Divider />
      <div className="flex gap-[9px] pl-3 pr-3">
        <SmallButtons
          items={[
            ["saveAs", "项目另存为"],
            ["incognito", "匿名保存项目"],
            ["docsActive", "来自已激活文件的项目"],
          ]}
        />
        <SmallButtons
          items={[
            ["merge", "合并项目"],
            ["openFile", "打开交互文件"],
            ["exportIcon", "输出交互文件"],
          ]}
        />
      </div>
      <Divider />
      <BigButton icon="external" label="外部文件" menu className="px-[14px]" />
      <Divider />
    </div>
  );
}

const COLUMN_ONE_TOP = ["扩散过程中的一致性与理念转变，可以更好地把握", "<智慧城市的建设主线和前沿议题。"];

/* Line prefixes: "<" is a ragged last line, ">" a first line with indent. {key|text} is a coded passage. */
const COLUMN_ONE = [
  ">{o|国内智慧城市建设主张较多，针对不同城市规}",
  "{O|模、不同应用层次，以及不同应用切入点，学界形成}",
  "{O|了不同的理论观点，而对智慧城市建设的目标、内涵}",
  "{O|和组织过程的认识还并不完全一致。} {g|王璐等}{g^|[4]}{g|在分}",
  "{G|析智慧城市建设途径时，就提出了创新驱动型、产业}",
  "{G|驱动型、管理服务驱动型、可持续发展型和多目标发}",
  "{G|展型等政策类型；国脉互联智慧城市研究中心}{G^|[5]}{G|则提}",
  "{G|出智慧城市 PSF 体系和以人为本(People-Oriented)、}",
  "{G|城市系统(System)与资源流(Flow)有机结合的政策}",
  "{G|体系。因此，黄璜等}{G^|[6]}{G|学者认为，城市决策者与 IT 界}",
  "{G|在对智慧城市的理解和实施中存在“城市标签化”现}",
  "{G|象，即根据各自对智慧城市的理解和实施的需要定}",
  "{G|义或解读智慧城市的内涵}{l|。}结合已有的研究，笔者认",
  "<为具有代表{u|性}的研究观点主要有三类：",
  ">(1){r|从城市发展与政府治理视角解读智慧城市}",
  "{r|建设内涵，强调资源利用效率、产业创新与生态和谐}。",
  "如具有半官方代表的中国智慧城市论坛 (CSCF)主",
  "张从社会发展和城市治理的高度诠释智慧城市的内",
  "涵，将智慧城市发展视为中国经济和社会发展的高",
  "级阶段与优化模式。如成思危副委员长，全国人大常",
  "委、民建中央辜胜阻副主席等主张智慧城市是继数",
  "字城市和智能城市后形成的城市信息化高级形态，",
  "是信息化、工业化和城镇化的深度融合{t^|[7]}。这类政策",
  "话语中的典型政策诉求如 “两化融合”“四化同步”",
  "<“新兴产业”“幸福宜居城市”“可持续发展”等。",
  ">(2){c|从技术应用的视角解读智慧城市建设内涵，}",
  "{C|既包括信息应用系统规划与实现，也包括以物联网、}",
  "{C|云计算等新兴技术的采纳与应用，即具有应用维度}",
  "{C|和技术维度两种解读视角}。应用维度以三大运营商",
  "和{b|思科、IBM、华为}等为代表的系统服务商，主张智慧",
  "城市的落脚点仍为复杂信息系统建设，如 IBM 大中",
  "华区首席技术官兼 IBM 中国研究院院长李实恭博士",
  "认为智慧化可简单类比为“全社会 ERP”系统{t^|[8]}；华",
  "为也认为，智慧城市是充分利用数字化及相关计算",
];

const COLUMN_TWO = [
  "各方面内容进行全方面的信息化处理和利用，具有",
  "对城市地理、资源、生态、环境、人口、经济、社会等复",
  "杂系统的数字网络化管理、服务与决策功能的信息",
  "体系{t^|[9]}。技术维度以国脉智慧城市研究中心、赛迪网",
  "络为代表的一批技术服务和咨询机构，主张将智慧",
  "城市的落脚点定格为物联网、无线互联网和云计算",
  "中心建设{t^|[10]}，主张运用{b|创新技术}改进信息应用或智",
  "慧应用的应用层次，改进信息采集、信息处理和信息",
  "交互过程，从而在原有信息化基础上“更加”智能化。",
  "这类政策话语中的典型政策诉求为功能性信息基础",
  "<设施、信息基础设施改良等。",
  ">(3){c|人本主义视角的智慧城市解读，主张政府、}",
  "{C|企业和公众的信息化体验与便捷应用，主张智慧城}",
  "{C|市落脚于信息资源共享和数字惠民等业务流程的改}",
  "{c|进}。如中国工程院副院长{b|邬贺铨院士}{t^|[11-12]}认为，“智",
  "慧城市” 建设中遇到的最迫切的难题为城市信息资",
  "源共享不够，各{y|政}府、部门间业务协同不强，实现信",
  "息化便民、惠民的目标不明确；{b|沈山}等{t^|[13]}提出智慧城",
  "市营造了智慧产业空间、智慧社交空间、个体行为空",
  "间、居民社区空间和人的意象空间五种虚实交错的",
  "空间形式，是一种新的生产与生活体验。这类政策话",
  "语中涌现出的政策诉求则包括 “信息惠民”“资源共",
  "<享”“智慧民生”等。",
  ">{e|此外，}{v|智慧城市也被认为是深化改革、转变经济}",
  "{v|发展模式的有效手段之一，并纳入了国家宏观战略}",
  "{V|发展的战略维度}{e|。智慧城市政策多元解读模式一方}",
  "{e|面刺激了智慧城市的真实需求，推动了}{n|地方政府积}",
  "{N|极地政策探索与创新，不断提炼出新的政策议题和}",
  "{N|“政策话语”，丰富智慧城市政策的内涵}{e|，如“微城系}",
  "{e|统”“四心四美”等政策话语创新；另一方面，}{n|国家积}",
  "{N|极干预和引导政策导向，如八部委于 2014 年 8 月 27}",
  "{N|日印发的《关于促进智慧城市健康发展的指导意}",
  "{N|见》，明确提出了智慧城市建设举债融资的规避形}",
  "<{N|式，体现出鲜明的政策供给驱动与一致性规制}。",
];

const COLUMN_TWO_END = ["<3.1\u3000{p|智慧城市政策文本采集}", ">智慧城市政策主要有四种类型：第一，{w|智慧城市}"];

const MARKS: Record<string, string> = {
  o: "bg-[#a26c26] py-[2px]",
  O: "bg-[#a26c26] pb-[4px] pt-[3px]",
  g: "bg-[#478364] py-[2px]",
  G: "bg-[#478364] pb-[4px] pt-[3px]",
  l: "bg-[#6faa2a]",
  u: "bg-[#8ab6dd] py-[1px]",
  r: "bg-[#ea4f60] py-[2px]",
  c: "bg-[#e3364f] py-[2px]",
  C: "bg-[#e3364f] pb-[4px] pt-[3px]",
  b: "bg-[#1f5fa0] py-[1px]",
  y: "bg-[#ffff00] py-[1px]",
  e: "bg-[#b3b3b3] py-[2px]",
  v: "bg-[#8dab69] py-[2px]",
  V: "bg-[#8dab69] pb-[3px] pt-[3px]",
  n: "bg-[#dabf88] py-[2px]",
  N: "bg-[#dabf88] pb-[4px] pt-[3px]",
  p: "bg-[#961e96] py-[2px]",
  w: "bg-[#8a480c] py-[1px]",
  t: "text-[#555]",
};

function Line({ source }: { source: string }) {
  const ragged = source.startsWith("<");
  const indented = source.startsWith(">");
  const body = ragged || indented ? source.slice(1) : source;
  const plain = body.replace(/\{\w\^?\|([^}]*)\}/g, "$1");
  const wide = [...plain].filter((c) => c.charCodeAt(0) > 0x2fff).length;
  const narrow = plain.length - wide;
  const tight = wide + narrow * 0.5 + (indented ? 2 : 0) > 22;
  return (
    <p
      className={`whitespace-nowrap leading-[17px] ${ragged ? "" : "[text-align-last:justify]"} ${indented ? "pl-5" : ""} ${tight ? "[font-feature-settings:'halt']" : ""}`}
    >
      {body.split(/(\{\w\^?\|[^}]*\})/).map((part, i) => {
        const match = /^\{(\w)(\^?)\|([^}]*)\}$/.exec(part);
        if (!match) return <Fragment key={i}>{part}</Fragment>;
        return (
          <span key={i} className={MARKS[match[1]]}>
            {match[2] ? <span className="align-[3px] text-[6px] leading-none">{match[3]}</span> : match[3]}
          </span>
        );
      })}
    </p>
  );
}

function Lines({ items, className }: { items: string[]; className: string }) {
  return (
    <div className={`grid auto-rows-fr ${className}`}>
      {items.map((source, i) => (
        <Line key={i} source={source} />
      ))}
    </div>
  );
}

function Page() {
  return (
    <article className="grid grid-cols-[228px_228px] gap-x-[22px] pl-[13px] pt-1 font-['Liberation_Serif','Noto_Sans_CJK_SC',serif] text-[10px] font-medium text-[#111]">
      <div>
        <Lines items={COLUMN_ONE_TOP} className="h-[35px]" />
        <h3 className="flex h-[35px] items-center gap-[11px] text-[11px] font-bold">
          <span>2</span>中国智慧城市政策理念的多元化解读
        </h3>
        <Lines items={COLUMN_ONE} className="h-[598px]" />
        <p className="mt-2 pl-2 text-[11px]">
          <span className="bg-[#8a480c] py-px">2</span>6
        </p>
      </div>
      <div>
        <Lines items={COLUMN_TWO} className="h-[598px]" />
        <h3 className="flex h-[35px] items-center gap-[11px] text-[11px] font-bold">
          <span>3</span>中国智慧城市政策文本内容分析框架
        </h3>
        <Lines items={COLUMN_TWO_END} className="h-[35px]" />
      </div>
    </article>
  );
}

type Stripe = { x: number; top: number; bottom: number; ring?: number; color: string };

const STRIPES: Stripe[] = [
  { x: 120, top: 80, bottom: 140, ring: 110, color: "#d23c2a" },
  { x: 110, top: 111, bottom: 124, ring: 118, color: "#2163a5" },
  { x: 100, top: 80, bottom: 297, ring: 189, color: "#6faa2a" },
  { x: 90, top: 131, bottom: 296, ring: 214, color: "#2163a5" },
  { x: 120, top: 202, bottom: 261, ring: 232, color: "#e3364f" },
  { x: 110, top: 251, bottom: 264, ring: 258, color: "#2163a5" },
  { x: 110, top: 286, bottom: 299, ring: 293, color: "#ffff00" },
  { x: 120, top: 286, bottom: 299, ring: 293, color: "#ffff00" },
  { x: 120, top: 304, bottom: 317, ring: 311, color: "#2163a5" },
  { x: 120, top: 325, bottom: 349, ring: 337, color: "#ea4f60" },
  { x: 100, top: 414, bottom: 596, ring: 505, color: "#b0b0b0" },
  { x: 120, top: 413, bottom: 454, ring: 434, color: "#6faa2a" },
  { x: 120, top: 467, bottom: 507, ring: 487, color: "#ffcb60" },
  { x: 120, top: 519, bottom: 578, ring: 549, color: "#e3364f" },
  { x: 110, top: 519, bottom: 596, ring: 558, color: "#ffcb60" },
  { x: 120, top: 586, bottom: 599, ring: 593, color: "#2163a5" },
  { x: 120, top: 639, bottom: 652, ring: 646, color: "#961e96" },
  { x: 120, top: 660, bottom: 760, color: "#8a4d17" },
];

function StripeColumn() {
  const label = "absolute whitespace-nowrap text-[12px] leading-4";
  return (
    <div className="relative w-[129px] shrink-0 overflow-hidden border-r border-white bg-[#f4f4f4]">
      <svg width="129" height="733" viewBox="0 0 129 733" className="absolute left-0 top-0" aria-hidden="true">
        {STRIPES.map((s, i) => (
          <g key={i} fill="none" stroke={s.color} strokeWidth="2">
            <path d={`M${s.x + 3} ${s.top}H${s.x}V${s.bottom}H${s.x + 3}`} />
            {s.ring && <circle cx={s.x} cy={s.ring} r="3" fill="#f8f8f8" />}
          </g>
        ))}
      </svg>
      <span className={`${label} right-[38px] top-[103px] text-[#d23c2a]`}>建设理念</span>
      <span className={`${label} right-[48px] top-[182px] text-[#6faa2a]`}>总结</span>
      <span className={`${label} right-[48px] top-[225px] text-[#e3364f]`}>..人本主义视角</span>
      <span className={`${label} right-[48px] top-[286px] text-[#f7f720]`}>..欧盟</span>
      <span className={`${label} right-[18px] top-[301px] text-[#f7f720]`}>..IBM</span>
      <span className={`${label} left-[3px] top-[334px] w-[111px] overflow-hidden text-[#ea4f60]`}>..城市发展和政府治理</span>
      <span className={`${label} right-[38px] top-[427px] text-[#6faa2a]`}>..国家宏观战略</span>
      <span className={`${label} right-[38px] top-[480px] text-[#ffcb60]`}>..地方</span>
      <span className={`${label} right-[38px] top-[498px] text-[#a6a6a6]`}>其他类型</span>
      <span className={`${label} right-[38px] top-[542px] text-[#e3364f]`}>..技术应用视角</span>
      <span className={`${label} right-[38px] top-[558px] text-[#ffcb60]`}>..国家</span>
      <span className={`${label} right-[18px] top-[639px] text-[#961e96]`}>数据来源</span>
      <Icon name="laugh" className="absolute left-[65px] top-[118px] size-4" />
      <Icon name="pair" className="absolute left-[65px] top-[206px] size-4" />
      <Icon name="agent" className="absolute left-[66px] top-[251px] size-[14px]" />
      <Icon name="agent" className="absolute left-[96px] top-[318px] size-[14px]" />
      <Icon name="computer" className="absolute left-[75px] top-[585px] size-4" />
    </div>
  );
}

function MemoColumn() {
  return (
    <div className="relative w-4 shrink-0 bg-[#f4f4f4]">
      <div className="absolute left-[2px] top-[81px]"><Memo kind="plain" /></div>
      <div className="absolute left-[2px] top-[246px]"><Memo kind="T" /></div>
      <div className="absolute left-[2px] top-[343px]"><Memo kind="?" /></div>
      <div className="absolute left-[2px] top-[463px]"><Memo kind="plain" /></div>
      <div className="absolute left-[2px] top-[640px]"><Memo kind="orange" /></div>
    </div>
  );
}

function Highlighter({ color }: { color: string }) {
  return (
    <svg viewBox="0 0 16 16" className="size-4" aria-hidden="true">
      <path d="M8.500 3L12 0l4 3.500-3.500 4z" fill={color} />
      <path d="M4.500 7l4.500-4.500L13.500 7 9 11.500z" fill="#575757" />
      <path d="M4.500 7.500L8.500 11.500l-2 1.500H1.500z" fill={color} />
      <path d="M1 14.500h13V16H1z" fill={color} />
    </svg>
  );
}

function Browser() {
  const marker: [string, string][] = [
    ["#d23c2a", "红色"],
    ["#4f8fc6", "蓝色"],
    ["#6faa2a", "绿色"],
    ["#f8b91c", "黄色"],
    ["#961e96", "紫色"],
  ];
  return (
    <section className="flex min-h-0 flex-col overflow-hidden border border-[#bdbdbd] bg-[#f4f4f4]">
      <PanelHeader
        icon="edit"
        title="文本浏览器: 中国智慧城市政策理念..."
        left={[
          [["toTop", "第一页"], ["up", "上一页"], ["down", "下一页"], ["toBottom", "最后一页"], ["bookmark", "书签"]],
          [["zoomOut", "缩小"], ["zoomIn", "放大"], ["full", "实际大小"], ["fitWidth", "适合宽度"], ["fitPage", "适合页面"]],
        ]}
        groups={[
          [["printer", "打印"], ["exportIcon", "导出"]],
          [["search", "搜索"]],
          WINDOW_BUTTONS,
        ]}
      />
      <div className="flex h-[31px] shrink-0 items-center border-b border-[#bdbdbd] bg-[#f0f0f0] pb-[3px] pl-[9px]">
        <div className="relative h-[21px] w-[295px] shrink-0">
          <select aria-label="代码" className="block h-full w-full appearance-none rounded-[4px] border border-[#c6c6c6] bg-white pb-[3px] pl-[8px] text-[11px] leading-4 shadow-sm">
            <option>建设理念</option>
          </select>
          <svg viewBox="0 0 17 21" className="pointer-events-none absolute right-0 top-0 h-[21px] w-[17px]" aria-hidden="true">
            <path d="M0 0h13q4 0 4 4v13q0 4-4 4H0z" fill="#2f87f5" />
            <path d="M5 8.500L8.500 5 12 8.500M5 12.500L8.500 16 12 12.500" fill="none" stroke="#fff" strokeWidth="1.500" />
          </svg>
        </div>
        <div className="ml-[9px] flex gap-[11px]">
          <button type="button" aria-label="编码" className="size-4"><Icon name="code" /></button>
          <button type="button" aria-label="新代码编码" className="size-4"><Icon name="codeAdd" /></button>
          <button type="button" aria-label="实境编码" className="size-4"><Icon name="codeInvivo" /></button>
        </div>
        <div className="ml-[21px] flex gap-[11px]">
          {marker.map(([color, name]) => (
            <button key={name} type="button" aria-label={`${name}标记`} className="size-4">
              <Highlighter color={color} />
            </button>
          ))}
        </div>
        <button type="button" aria-label="表情代码" className="ml-[21px] size-4"><Icon name="smile" /></button>
        <button type="button" aria-label="撤销编码" className="ml-[21px] size-4"><Icon name="codeUndo" /></button>
        <button type="button" aria-label="更多" className="ml-auto mr-[3px] h-[18px] w-[14px]">
          <svg viewBox="0 0 14 14" className="size-[14px]" aria-hidden="true">
            <path d="M2 2l4 5-4 5M8 2l4 5-4 5" fill="none" stroke="#444" strokeWidth="1.700" />
          </svg>
        </button>
      </div>
      <div className="flex h-4 shrink-0 items-center border-b border-[#bdbdbd] bg-white">
        <div className="flex h-full w-[129px] items-center border-r border-[#bdbdbd] pl-1"><Icon name="knot" className="size-[11px]" /></div>
        <Icon name="page" className="ml-1 size-[10px]" />
      </div>
      <div className="flex min-h-0 flex-1">
        <StripeColumn />
        <MemoColumn />
        <div className="flex min-w-0 flex-1 flex-col border-l border-[#e8e8e8]">
          <div className="flex min-h-0 flex-1">
            <div className="min-w-0 flex-1 overflow-hidden bg-white">
              <Page />
            </div>
            <div className="w-[15px] shrink-0 border-l border-[#e2e2e2] bg-[#f8f8f8] pl-[3px] pt-[110px]">
              <div className="h-5 w-2 rounded-full bg-[#c1c1c1]" />
            </div>
          </div>
          <div className="h-[15px] shrink-0 border-t border-[#e2e2e2] bg-[#f8f8f8] pl-[18%] pt-[3px]">
            <div className="h-2 w-[73%] rounded-full bg-[#c1c1c1]" />
          </div>
        </div>
      </div>
    </section>
  );
}

type Segment = { range: string; sub?: string; color?: string; memo?: string; memoTop?: string; min: string; text: string[] };

const SEGMENTS: Segment[] = [
  {
    range: "2: 87 - 2: 175",
    min: "min-h-[157px]",
    text: ["国内智慧城市建设主张较多， 针对不同城市", "规", "模、不同应用层次，以及不同应用切入点，", "学界形成", "了不同的理论观点，而对智慧城市建设的目", "标、内涵", "和组织过程的认识还并不完全一致。"],
  },
  {
    range: "2: 467 - 2: 509",
    sub: "城市发展和政府治理视角",
    color: "#ea4f60",
    memo: "?",
    memoTop: "pt-3",
    min: "min-h-[132px]",
    text: ["从城市发展与政府治理视角解读智慧城市", "建设内涵，强调资源利用效率、产业创新与", "生态和谐"],
  },
  {
    range: "2: 748 - 2: 829",
    sub: "技术应用视角",
    color: "#e3364f",
    min: "min-h-[138px]",
    text: ["从技术应用的视角解读智慧城市建设内涵，", "既包括信息应用系统规划与实现，也包括以", "物联网、", "云计算等新兴技术的采纳与应用， 即具有应", "用维度", "和技术维度两种解读视角"],
  },
  {
    range: "2: 1286 - 2: 1356",
    sub: "人本主义视角",
    color: "#e3364f",
    memo: "T",
    memoTop: "pt-9",
    min: "min-h-[138px]",
    text: ["人本主义视角的智慧城市解读，主张政府、", "企业和公众的信息化体验与便捷应用， 主张", "智慧城", "市落脚于信息资源共享和数字惠民等业务流", "程的改", "进"],
  },
  {
    range: "2: 1586 - 2: 1637",
    sub: "国家宏观战略",
    color: "#6faa2a",
    min: "min-h-[127px]",
    text: ["智慧城市也被认为是深化改革、转变经济", "发展模式的有效手段之一， 并纳入了国家宏", "观战略", "发展的战略维度"],
  },
  {
    range: "2: 1674 - 2: 1723",
    sub: "地方",
    color: "#ffcb60",
    memo: "plain",
    memoTop: "pt-px",
    min: "min-h-[127px]",
    text: ["地方政府积", "极地政策探索与创新， 不断提炼出新的政策", "议题和", "“政策话语”，丰富智慧城市政策的内涵"],
  },
];

function Elbow() {
  return <span className="h-[7px] w-[6px] shrink-0 self-start border-b border-l border-[#b5b5b5]" />;
}

function Segments() {
  return (
    <section className="flex min-h-0 flex-col overflow-hidden border border-r-0 border-[#bdbdbd] bg-[#f4f4f4]">
      <PanelHeader
        icon="codes"
        title="已编码文本段..."
        groups={[
          [["grid", "总览"], ["gridCode", "编码总览"]],
          [["codeIdea", "注释"], ["squares", "比较"], ["cloud", "词云"]],
          [["code", "编码"], ["codeAdd", "新代码编码"]],
          [["printer", "打印"], ["excel", "导出到 Excel"], ["globe", "导出网页"], ["exportIcon", "导出"]],
          [["search", "搜索"]],
          WINDOW_BUTTONS,
        ]}
      />
      <div className="grid h-4 shrink-0 grid-cols-[185px_16px_1fr] items-stretch border-b border-[#bdbdbd] bg-white">
        <div className="flex items-center border-r border-[#bdbdbd] pl-1"><Icon name="flag" className="size-[11px]" /></div>
        <div className="flex items-center border-r border-[#bdbdbd] pl-1"><Icon name="note" className="size-[10px]" /></div>
        <div className="flex items-center pl-[5px]"><Icon name="page" className="size-[10px]" /></div>
      </div>
      <div className="flex min-h-0 flex-1">
        <div className="min-w-0 flex-1 overflow-hidden">
          {SEGMENTS.map((s) => (
            <div key={s.range} className={`grid grid-cols-[185px_16px_1fr] ${s.min}`}>
              <div className="self-start border-b border-r border-[#bdbdbd] bg-[#fafafa] pb-[10px] text-[11px]">
                <div className="h-[13px] bg-[#6ba5d3] pr-[3px] text-right text-[10px] leading-[12px] text-white">0</div>
                <div className="flex h-[18px] items-center gap-[6px] pl-[5px]"><Icon name="folder" />智慧城市</div>
                <div className="flex h-[18px] items-center pl-[6px]"><Elbow /><Icon name="pdfEdit" className="ml-[4px] size-[17px]" /><span className="ml-[5px] whitespace-nowrap">中国智慧城市政策理念多元...</span></div>
                <div className="flex h-4 items-center pl-[16px]">
                  <Elbow />
                  <span className="ml-[9px] h-2 w-[3px] border-y border-l border-[#8a8a8a]" />
                  <span className="ml-[11px]">{s.range}</span>
                </div>
                <div className="flex h-[18px] items-center gap-[6px] pl-[5px]"><Tag color="#d23c2a" active />建设理念</div>
                {s.sub && (
                  <div className="flex h-[18px] items-center pl-[5px]">
                    <Elbow />
                    <span className="ml-[5px] flex items-center gap-[6px]"><Tag color={s.color ?? ""} active />{s.sub}</span>
                  </div>
                )}
              </div>
              <div className={`border-l border-white ${s.memoTop ?? ""}`}>{s.memo && <Memo kind={s.memo} />}</div>
              <div className="whitespace-nowrap bg-white pl-[10px] text-[13px] leading-[19px]">
                {s.text.map((line) => (
                  <p key={line}>{line}</p>
                ))}
              </div>
            </div>
          ))}
        </div>
        <div className="w-[14px] shrink-0 border-l border-[#e2e2e2] bg-[#f8f8f8] pl-[3px] pt-1">
          <div className="h-[48%] w-2 rounded-full bg-[#c1c1c1]" />
        </div>
      </div>
    </section>
  );
}

const TABS = ["开始", "导入", "代码", "变量", "分析", "混合方法", "可视化工具", "报告", "Stats", "MAXDictio"];
const COLUMNS = "grid grid-cols-[minmax(0,502fr)_minmax(0,664fr)_minmax(0,505fr)] gap-x-1";

export default function App() {
  return (
    <div className="flex h-screen flex-col overflow-hidden bg-white font-['Inter','Noto_Sans_CJK_SC',sans-serif] text-black">
      <div className="relative flex h-[23px] shrink-0 items-center justify-center border-b border-t border-b-[#adadad] border-t-[#8ba4c8] bg-linear-to-b from-[#e9e9e9] to-[#d2d2d2]">
        <div className="absolute left-[7px] flex gap-[7px]">
          <button type="button" aria-label="关闭窗口" className="size-3 rounded-full bg-[#f4645a]" />
          <button type="button" aria-label="最小化" className="size-3 rounded-full bg-[#f8bd2f]" />
          <button type="button" aria-label="最大化" className="size-3 rounded-full bg-[#28c840]" />
        </div>
        <h1 className="whitespace-pre text-[13px] leading-5 text-[#333]">
          {"/Users/Haiqin/Desktop/LifeSatisfaction_chinesisch_simplified_optimiert Kopie.mx18 - MAXQDA Analytics Pro 2018  (Release 18.0.3)"}
        </h1>
      </div>
      <nav className="flex h-[33px] shrink-0 items-end border-b border-[#cfcfcf] pl-[3px]">
        {TABS.map((tab, i) => (
          <a
            key={tab}
            href="#"
            className={`flex h-[29px] items-center border-b-4 px-[17px] pt-[6px] text-[11px] font-bold ${i === 0 ? "border-[#8bbd3c]" : "border-transparent"}`}
          >
            {tab}
          </a>
        ))}
        <div className="mb-[6px] ml-auto mr-[14px] flex items-center gap-2">
          <button type="button" aria-label="撤销"><Icon name="undo" /></button>
          <button type="button" aria-label="重做"><Icon name="redo" /></button>
          <button type="button" aria-label="展开" className="ml-6"><Icon name="chevron" /></button>
          <button type="button" aria-label="设置"><Icon name="gear" /></button>
          <button type="button" aria-label="反馈"><Icon name="face" /></button>
          <button type="button" aria-label="帮助"><Icon name="help" /></button>
        </div>
      </nav>
      <Ribbon />
      <main className={`min-h-0 flex-1 ${COLUMNS}`}>
        <div className="grid min-h-0 grid-rows-[minmax(0,405fr)_minmax(0,404fr)] gap-[3px]">
          <section className="flex min-h-0 flex-col overflow-hidden border border-[#bdbdbd]">
            <PanelHeader
              icon="textList"
              title="文本列表"
              groups={[
                [["docsUndo", "重置激活"], ["docsCopy", "激活文本"], ["docFilter", "筛选"]],
                [["docImport", "导入文件"], ["docAdd", "新建文本"], ["folderAdd", "新建文件夹"]],
                [["search", "搜索"]],
                WINDOW_BUTTONS,
              ]}
            />
            <TreeTable rows={DOCUMENTS} countIcon="hash" thumb="h-[83%]" label="文本列表" />
          </section>
          <section className="flex min-h-0 flex-col overflow-hidden border border-t-[5px] border-[#bdbdbd] border-t-[#8bbd3c]">
            <PanelHeader
              compact
              icon="tags"
              title="代码列表"
              groups={[
                [["tagUndo", "重置代码激活"]],
                [["smile", "表情代码"], ["grid", "代码总览"]],
                [["tagAdd", "新代码"]],
                [["search", "搜索"]],
                WINDOW_BUTTONS,
              ]}
            />
            <TreeTable rows={CODES} countIcon="knot" thumb="h-[52%]" label="代码列表" />
          </section>
        </div>
        <Browser />
        <Segments />
      </main>
      <footer className={`h-[23px] shrink-0 items-center text-[11px] ${COLUMNS}`}>
        <div className="grid grid-cols-[repeat(6,83px)] pl-4">
          <span className="flex items-center gap-1"><Icon name="docRed" />1</span>
          <span className="flex items-center gap-1"><Icon name="tagRed" />7</span>
          <span className="flex items-center gap-1"><Icon name="codes" />10</span>
          <span className="flex items-center gap-1"><Icon name="codeWeight" />0</span>
          <span className="flex items-center"><Icon name="weight" /></span>
          <span className="flex items-center"><Icon name="user" /></span>
        </div>
        <div className="flex items-center pl-[9px]">
          <Icon name="docDown" />
          <span className="ml-[67px] flex items-center gap-[4px]"><Icon name="retrieval" className="size-[15px]" />简单编码检索（或者编码组合）</span>
        </div>
      </footer>
    </div>
  );
}
